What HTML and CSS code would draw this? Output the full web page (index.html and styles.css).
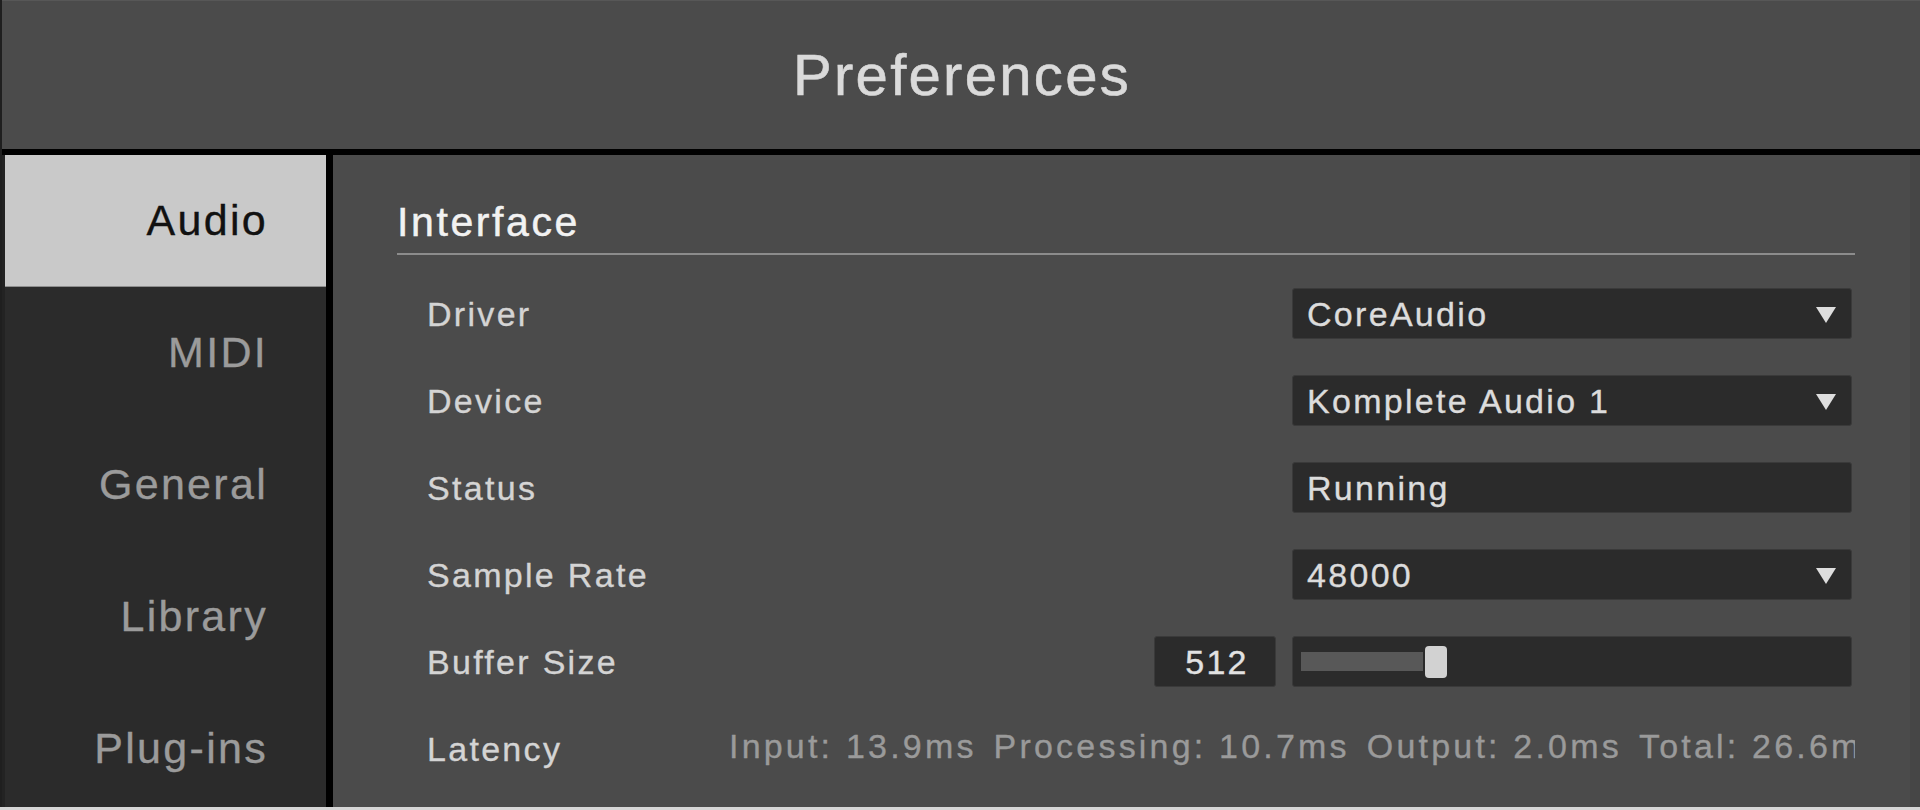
FILE: index.html
```html
<!DOCTYPE html>
<html lang="en">
<head>
<meta charset="utf-8">
<title>Preferences</title>
<link rel="stylesheet" href="styles.css">
</head>
<body>
<div class="app">
  <header class="header">
    <h1 class="title">Preferences</h1>
  </header>
  <div class="main">
    <nav class="sidebar">
      <div class="tab tab-active">Audio</div>
      <div class="tab">MIDI</div>
      <div class="tab">General</div>
      <div class="tab">Library</div>
      <div class="tab">Plug-ins</div>
    </nav>
    <section class="content">
      <h2 class="section-title">Interface</h2>
      <div class="rows">
        <div class="row">
          <span class="label">Driver</span>
          <div class="field dropdown"><span class="value">CoreAudio</span><span class="arrow"></span></div>
        </div>
        <div class="row">
          <span class="label">Device</span>
          <div class="field dropdown"><span class="value">Komplete Audio 1</span><span class="arrow"></span></div>
        </div>
        <div class="row">
          <span class="label">Status</span>
          <div class="field"><span class="value">Running</span></div>
        </div>
        <div class="row">
          <span class="label">Sample Rate</span>
          <div class="field dropdown"><span class="value">48000</span><span class="arrow"></span></div>
        </div>
        <div class="row">
          <span class="label">Buffer Size</span>
          <div class="buffer">
            <div class="num">512</div>
            <div class="field slider"><div class="fill"></div><div class="thumb"></div></div>
          </div>
        </div>
        <div class="row">
          <span class="label label-fixed">Latency</span>
          <div class="latency">
            <span>Input: 13.9ms</span>
            <span>Processing: 10.7ms</span>
            <span>Output: 2.0ms</span>
            <span>Total: 26.6ms</span>
          </div>
        </div>
      </div>
    </section>
  </div>
</div>
</body>
</html>
```

FILE: styles.css
```css
* { box-sizing: border-box; }

html, body {
  margin: 0;
  padding: 0;
}

body {
  background: #d6d6d6;
  font-family: "Liberation Sans", Arial, sans-serif;
  letter-spacing: 2.3px;
  overflow: hidden;
  -webkit-text-stroke: 0.35px currentColor;
}

.app {
  height: 807px;
  display: flex;
  flex-direction: column;
  border-left: 2px solid #1f1f1f;
  background: #4b4b4b;
}

.header {
  height: 155px;
  flex: none;
  background: #4b4b4b;
  border-top: 1px solid #575757;
  border-bottom: 6px solid #000;
  display: flex;
  align-items: center;
  justify-content: center;
}

.title {
  margin: 0;
  font-size: 58px;
  line-height: 58px;
  font-weight: normal;
  color: #dadada;
  margin-left: 2px;
  -webkit-text-stroke: 0.6px currentColor;
}

.main {
  flex: 1;
  display: flex;
  min-height: 0;
}

.sidebar {
  width: 331px;
  flex: none;
  background: #2b2b2b;
  border-left: 3px solid #232323;
  border-right: 7px solid #000;
  overflow: hidden;
}

.tab {
  height: 132px;
  border-bottom: 1px solid transparent;
  display: flex;
  align-items: center;
  justify-content: flex-end;
  padding-right: 58px;
  font-size: 43px;
  line-height: 43px;
  color: #9b9b9b;
}

.tab-active {
  background: #c9c9c9;
  color: #111;
  border-bottom-color: #8e8e8e;
}

.content {
  flex: 1;
  background: #4b4b4b;
  padding: 47px 55px 0 64px;
  border-right: 10px solid #464646;
  min-width: 0;
}

.section-title {
  margin: 0;
  font-size: 41px;
  line-height: 41px;
  font-weight: normal;
  color: #f2f2f2;
  padding-bottom: 10px;
  border-bottom: 2px solid #8c8c8c;
  letter-spacing: 2.6px;
  -webkit-text-stroke: 0.5px currentColor;
}

.rows {
  display: flex;
  flex-direction: column;
  gap: 36px;
  padding-top: 33px;
  padding-left: 30px;
}

.row {
  height: 51px;
  display: flex;
  align-items: center;
  font-size: 34px;
  line-height: 34px;
}

.label {
  color: #d4d4d4;
  flex: none;
}

.label-fixed {
  width: 302px;
}

.field {
  margin-left: auto;
  margin-right: 3px;
  width: 560px;
  height: 51px;
  background: #2b2b2b;
  border: 1px solid #3a3a3a;
  border-radius: 3px;
  display: flex;
  align-items: center;
  padding: 0 15px 0 14px;
  color: #dcdcdc;
}

.value {
  flex: 1;
  white-space: nowrap;
}

.arrow {
  width: 0;
  height: 0;
  border-left: 10px solid transparent;
  border-right: 10px solid transparent;
  border-top: 16px solid #dedede;
  margin-top: 2px;
}

.buffer {
  margin-left: auto;
  display: flex;
  gap: 16px;
  align-items: center;
}

.buffer .field {
  margin-left: 0;
}

.num {
  width: 122px;
  height: 51px;
  background: #2b2b2b;
  border: 1px solid #3a3a3a;
  border-radius: 3px;
  display: flex;
  align-items: center;
  justify-content: center;
  color: #e2e2e2;
  padding-left: 4px;
}

.slider {
  padding-left: 8px;
}

.fill {
  width: 122px;
  height: 19px;
  background: #585858;
}

.thumb {
  width: 22px;
  height: 32px;
  margin-left: 2px;
  background: #d2d2d2;
  border-radius: 4px;
}

.latency {
  flex: 1;
  min-width: 0;
  height: 51px;
  line-height: 46px;
  overflow: hidden;
  white-space: nowrap;
  display: flex;
  gap: 17px;
  color: #9a9a9a;
  letter-spacing: 3.2px;
}

.latency span {
  flex: none;
}
```
